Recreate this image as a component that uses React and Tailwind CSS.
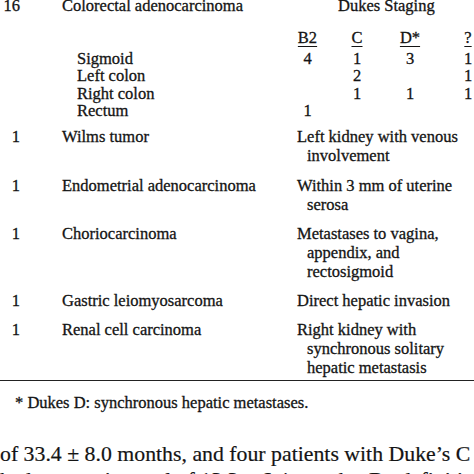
import React from "react";

const stageW = ["w-[21px]", "ml-[27px] w-[24px]", "ml-[26px] w-[30px]", "ml-[35px] w-[16px]"];

function Stages({ vals, header }) {
  return (
    <div className="flex">
      {vals.map((v, i) => (
        <div key={i} className={stageW[i] + " shrink-0 text-center whitespace-nowrap"}>
          {header ? (
            <span className="underline decoration-1 underline-offset-[3px]">{v}</span>
          ) : (
            v
          )}
        </div>
      ))}
    </div>
  );
}

function Group({ n, name, lines, className }) {
  return (
    <div className={"grid grid-cols-[20px_42px_235px_177px] leading-[19.3px] " + (className || "")}>
      <div className="text-right">{n}</div>
      <div />
      <div className="whitespace-nowrap">{name}</div>
      <div className="flex flex-col whitespace-nowrap">
        {lines.map((l, i) => (
          <div key={i} className={i > 0 ? "pl-[10px]" : ""}>
            {l}
          </div>
        ))}
      </div>
    </div>
  );
}

function SiteRow({ site, vals }) {
  return (
    <div className="grid grid-cols-[20px_42px_235px_177px] leading-[17.4px]">
      <div />
      <div />
      <div className="pl-[15px] whitespace-nowrap">{site}</div>
      <Stages vals={vals} />
    </div>
  );
}

export default function App() {
  return (
    <div className="w-[474px] h-[474px] overflow-hidden bg-white text-[#141414] font-['Liberation_Serif',serif] text-[16.5px]">
      <div className="-mt-[3.7px] flex flex-col [-webkit-text-stroke:0.3px_#141414]">
        <div className="grid grid-cols-[20px_42px_235px_177px] leading-[19.3px]">
          <div className="text-right">16</div>
          <div />
          <div className="whitespace-nowrap">Colorectal adenocarcinoma</div>
          <div className="pl-[41px] whitespace-nowrap">Dukes Staging</div>
        </div>
        <div className="mt-[12.2px] grid grid-cols-[20px_42px_235px_177px] leading-[19.3px]">
          <div />
          <div />
          <div />
          <Stages vals={["B2", "C", "D*", "?"]} header />
        </div>
        <div className="mt-[2.6px] flex flex-col">
          <SiteRow site="Sigmoid" vals={["4", "1", "3", "1"]} />
          <SiteRow site="Left colon" vals={["", "2", "", "1"]} />
          <SiteRow site="Right colon" vals={["", "1", "1", "1"]} />
          <SiteRow site="Rectum" vals={["1", "", "", ""]} />
        </div>
        <Group className="mt-[7.5px]" n="1" name="Wilms tumor" lines={["Left kidney with venous", "involvement"]} />
        <Group className="mt-[10.4px]" n="1" name="Endometrial adenocarcinoma" lines={["Within 3 mm of uterine", "serosa"]} />
        <Group
          className="mt-[9.4px]"
          n="1"
          name="Choriocarcinoma"
          lines={["Metastases to vagina,", "appendix, and", "rectosigmoid"]}
        />
        <Group className="mt-[9.1px]" n="1" name="Gastric leiomyosarcoma" lines={["Direct hepatic invasion"]} />
        <Group
          className="mt-[9.7px]"
          n="1"
          name="Renal cell carcinoma"
          lines={["Right kidney with", "synchronous solitary", "hepatic metastasis"]}
        />
        <div className="mt-[2px] border-t-[1.5px] border-[#222]" />
        <div className="mt-[12.5px] pl-[15px] leading-[19.3px] whitespace-nowrap">
          <span>*</span> Dukes D: synchronous hepatic metastases.
        </div>
        <div className="mt-[29px] text-[21.8px] leading-[26px] whitespace-nowrap [-webkit-text-stroke:0.2px_#141414]">
          <div>of 33.4 ± 8.0 months, and four patients with Duke’s C</div>
          <div>had a mean interval of 13.3 ± 6.4 months. By definition,</div>
        </div>
      </div>
    </div>
  );
}
